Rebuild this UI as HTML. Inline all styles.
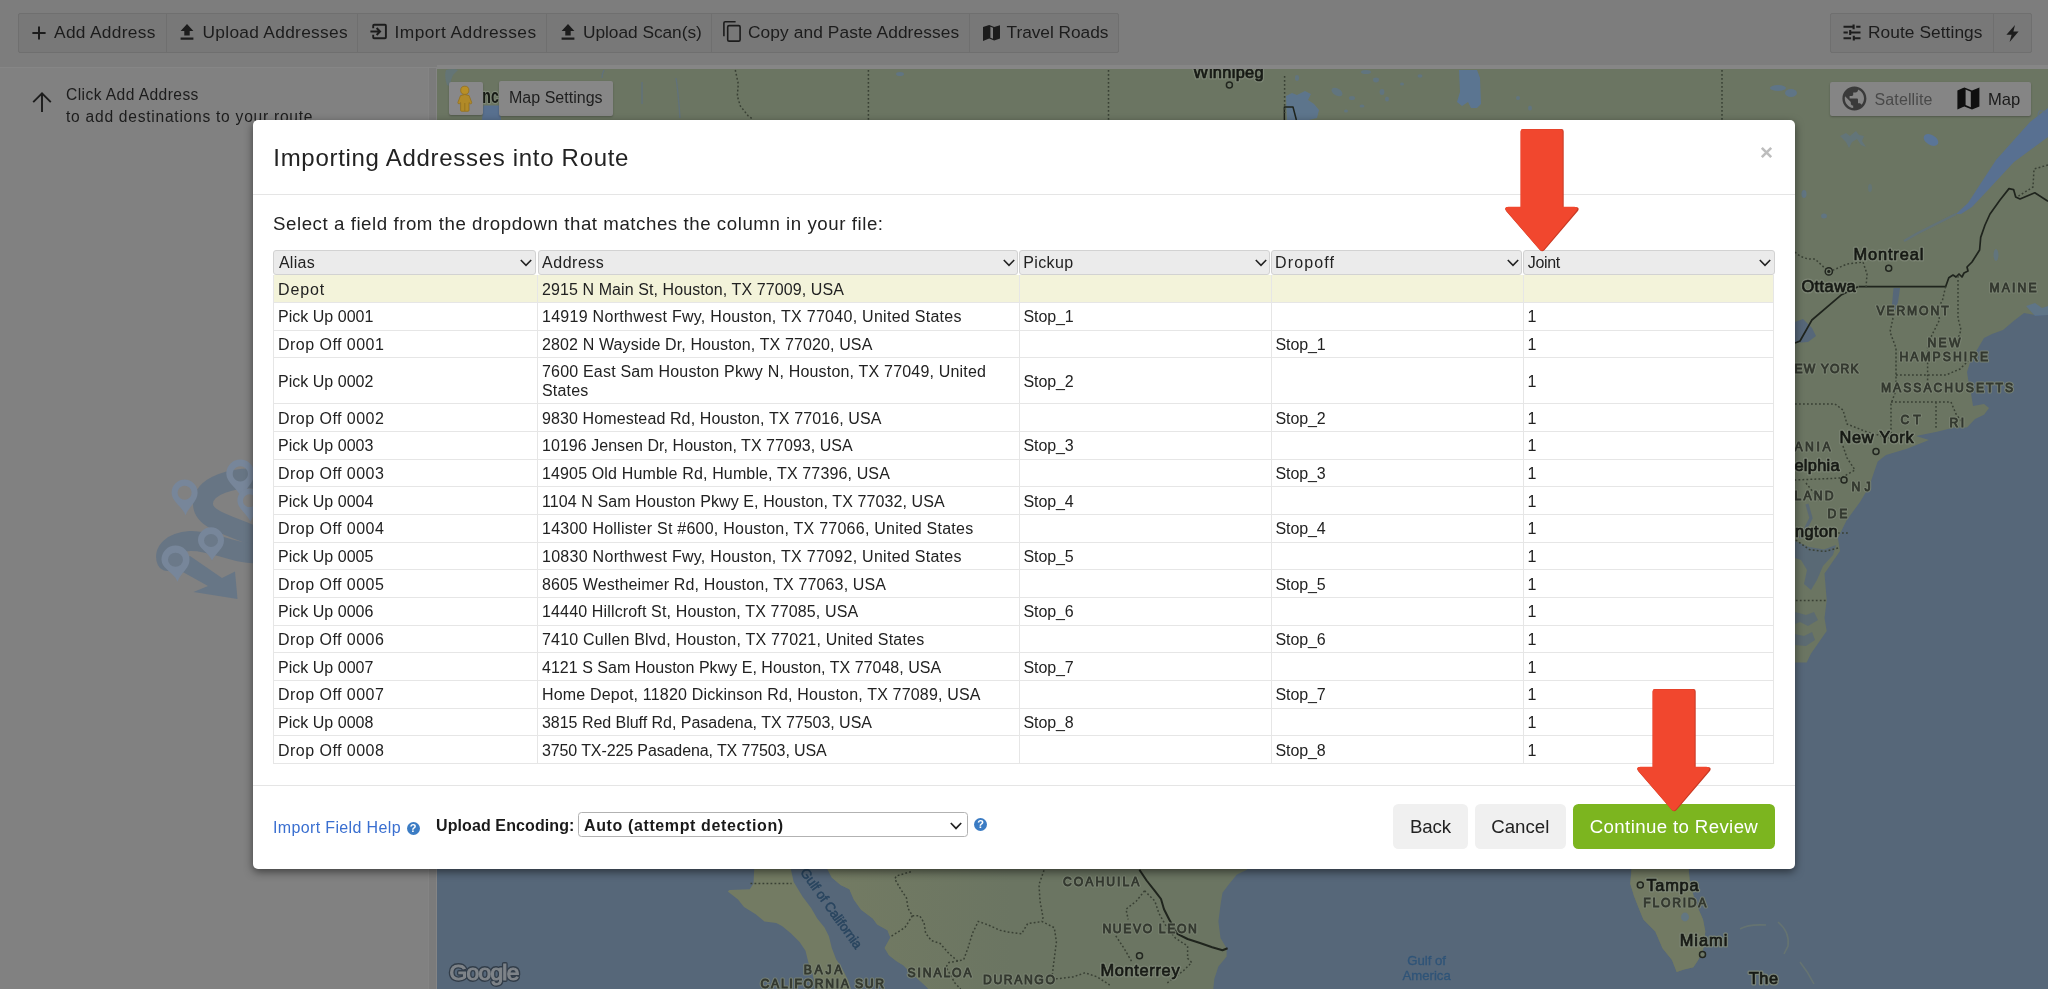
<!DOCTYPE html>
<html lang="en">
<head>
<meta charset="utf-8">
<title>Importing Addresses into Route</title>
<style>
*{box-sizing:border-box}
html,body{margin:0;padding:0}
body{width:2048px;height:989px;overflow:hidden;position:relative;background:#818181;font-family:"Liberation Sans",Arial,sans-serif;color:#1a1a1a}
.abs{position:absolute}
#toolbar,#left,#hint,#modal,#map{will-change:transform;backface-visibility:hidden}
/* ---------- top toolbar ---------- */
#toolbar{position:absolute;left:0;top:0;width:2048px;height:68px;background:#7d7d7d;border-bottom:1px solid #868686}
#mapedge{position:absolute;left:437px;top:65px;width:1611px;height:4px;background:#868686}
.tgroup{position:absolute;top:13px;height:40px;background:#787878;border:1px solid #6f6f6f;border-radius:2px}
.tbtn{position:absolute;top:0;height:38px;border-right:1px solid #6f6f6f}
.tbtn:last-child{border-right:none}
.tbtn span{position:absolute;top:7.5px;font-size:17px;line-height:20px;white-space:nowrap;color:#1c1c1c}
.tbtn svg{position:absolute;overflow:visible}
/* ---------- left panel ---------- */
#left{position:absolute;left:0;top:68px;width:428px;height:921px;background:#818181}
#divider{position:absolute;left:428px;top:68px;width:9px;height:921px;background:#7b7b7b;border-left:1px solid #848484;border-right:1px solid #858585}
#hint{position:absolute;left:66px;top:83.6px;font-size:15.6px;line-height:22px;color:#1c1c1c;white-space:nowrap;letter-spacing:.5px}
/* ---------- map ---------- */
#map{position:absolute;left:437px;top:69px;width:1611px;height:920px;background:#6b7562;overflow:hidden}
.mbtn{position:absolute;background:#878787;border-radius:2px;box-shadow:0 1px 2px rgba(0,0,0,.25)}
/* ---------- modal ---------- */
#modal{position:absolute;left:253px;top:120px;width:1542px;height:748.5px;background:#fff;border-radius:5px;box-shadow:0 3px 8px rgba(0,0,0,.5)}
#mtitle{position:absolute;left:20.3px;top:22.5px;font-size:24px;line-height:30px;white-space:nowrap;color:#222;letter-spacing:.7px}
#mclose{position:absolute;left:1507.4px;top:25.5px;width:13px;height:13px}
.hr{position:absolute;left:0;width:1542px;height:1px;background:#e5e5e5}
#instr{position:absolute;left:20px;top:92px;font-size:18.67px;line-height:24px;white-space:nowrap;color:#222;letter-spacing:.56px}
/* table */
#tbl{position:absolute;left:20px;top:129.5px;width:1502px;height:514px}
.sel{position:absolute;top:0;height:25px;background:#ebebeb;border:1px solid #d2d2d2;border-radius:3px;font-size:16px;line-height:23px;padding-left:5px;color:#222;white-space:nowrap;letter-spacing:.2px}
.sel svg{position:absolute;right:2.5px;top:8px}
.row{position:absolute;left:0;width:1501px;border-bottom:1px solid #e6e6e6;border-left:1px solid #e6e6e6;border-right:1px solid #e6e6e6;background:#fff}
.row.depot{background:#f3f3da}
.c{position:absolute;top:0;height:100%;border-left:1px solid #e6e6e6;font-size:16px;line-height:19px;color:#222;padding-left:4px;padding-top:1px;display:flex;align-items:center}
.c:first-child{border-left:none}
/* footer */
#help{position:absolute;left:20px;top:696.3px;font-size:16px;line-height:24px;color:#3a6fd0;white-space:nowrap;letter-spacing:.36px}
#enc{position:absolute;left:183px;top:694px;font-size:16px;line-height:24px;font-weight:bold;color:#1a1a1a;white-space:nowrap;letter-spacing:.1px}
#encsel{position:absolute;left:325px;top:692px;width:390px;height:25px;border:1px solid #b2b2b2;border-radius:3.5px;background:#fff;font-size:16px;line-height:25px;font-weight:bold;padding-left:5px;color:#1a1a1a;white-space:nowrap;letter-spacing:.62px}
.qm{position:absolute;width:13px;height:13px;border-radius:50%;background:#3b7cc4;color:#fff;font-size:11px;line-height:13px;font-weight:bold;text-align:center}
.btn{position:absolute;top:684px;height:44.5px;border-radius:5.5px;font-size:18.67px;line-height:45.5px;text-align:center;white-space:nowrap;color:#222;background:#f0f0f0}
.btn.go{background:#7cb51f;color:#fff}
.arrow{position:absolute;overflow:visible}
</style>
</head>
<body>
<div id="toolbar">
  <div class="tgroup" style="left:17.5px;width:1101.5px">
    <div class="tbtn" style="left:0;width:148px">
      <svg style="left:13.5px;top:11.5px" width="14" height="14" viewBox="0 0 14 14"><path d="M7 .4v13.200M.4 7h13.200" stroke="#1c1c1c" stroke-width="2" fill="none"/></svg>
      <span style="left:35.5px;letter-spacing:.32px;font-size:17.33px">Add Address</span>
    </div>
    <div class="tbtn" style="left:148px;width:191px">
      <svg style="left:13px;top:9.800px" width="14" height="16" viewBox="0 0 14 16"><path d="M7 0 13.4 7H9.7V11.6H4.3V7H.6zM.6 13.6h12.8v2.1H.6z" fill="#1c1c1c"/></svg>
      <span style="left:36px;letter-spacing:.3px;font-size:17.33px">Upload Addresses</span>
    </div>
    <div class="tbtn" style="left:339px;width:189px">
      <svg style="left:12px;top:10px" width="17" height="15" viewBox="0 0 17 15"><path d="M3.2 4.2V1.7Q3.2.8 4.1.8H15q.9 0 .9.9v11.6q0 .9-.9.9H4.1q-.9 0-.9-.9v-2.5" stroke="#1c1c1c" stroke-width="1.900" fill="none"/><path d="M.4 7.5h9.400M6.600 4 10.100 7.500 6.600 11" stroke="#1c1c1c" stroke-width="1.900" fill="none"/></svg>
      <span style="left:37px;letter-spacing:.45px;font-size:17.33px">Import Addresses</span>
    </div>
    <div class="tbtn" style="left:528px;width:165px">
      <svg style="left:14px;top:9.800px" width="14" height="16" viewBox="0 0 14 16"><path d="M7 0 13.4 7H9.7V11.6H4.3V7H.6zM.6 13.6h12.8v2.1H.6z" fill="#1c1c1c"/></svg>
      <span style="left:36.5px;letter-spacing:-.05px;font-size:17.33px">Upload Scan(s)</span>
    </div>
    <div class="tbtn" style="left:693px;width:258.5px">
      <svg style="left:11.5px;top:7px" width="18" height="21" viewBox="0 0 18 21"><path d="M12.6.8H2.2Q.9.8.9 2.1v13.2" stroke="#1c1c1c" stroke-width="1.6" fill="none"/><rect x="4.7" y="4.6" width="12.4" height="15.5" rx="1.4" stroke="#1c1c1c" stroke-width="1.6" fill="none"/></svg>
      <span style="left:36.5px;letter-spacing:.09px;font-size:17.33px">Copy and Paste Addresses</span>
    </div>
    <div class="tbtn" style="left:951.5px;width:148px">
      <svg style="left:12.5px;top:10.5px" width="17" height="16" viewBox="0 0 17 16"><path d="M0 1.900 6.200 0 11.200 1.900 17 .3V13.600L11.200 15.400 6.200 13.600 0 16z" fill="#1c1c1c"/><path d="M7.400 1.700 10 2.700V13.800L7.400 12.800z" fill="#7c7c7c"/></svg>
      <span style="left:36.5px;letter-spacing:-.04px;font-size:17.33px">Travel Roads</span>
    </div>
  </div>
  <div class="tgroup" style="left:1830px;width:202px">
    <div class="tbtn" style="left:0;width:162.5px">
      <svg style="left:12px;top:9.5px" width="18" height="17" viewBox="0 0 18 17"><path d="M.5 2.8h10M13.2 2.8h4.3M.5 8.5h4.3M7.4 8.5h10.1M.5 14.2h7.6M10.8 14.2h6.7M10.6.4v4.8M7.2 6.1v4.8M10.8 11.8v4.8" stroke="#1c1c1c" stroke-width="2.1" fill="none"/></svg>
      <span style="left:37px;letter-spacing:.06px;font-size:17.33px">Route Settings</span>
    </div>
    <div class="tbtn" style="left:162.5px;width:37.5px">
      <svg style="left:12px;top:11px" width="13" height="17" viewBox="0 0 13 17"><path d="M9 0 .4 9.8h5.2L3.6 17l9-10.6H7.4z" fill="#1c1c1c"/></svg>
    </div>
  </div>
</div>
<div id="left">
  <svg class="abs" style="left:32px;top:24px" width="20" height="21" viewBox="0 0 20 21"><path d="M10 20V1.6M1.2 10.2 10 1.4l8.8 8.8" stroke="#1c1c1c" stroke-width="1.9" fill="none"/></svg>
  <svg class="abs" style="left:150px;top:372px" width="103" height="180" viewBox="150 440 103 180">
    <g fill="none" stroke="#677584" stroke-width="20" stroke-linecap="round" stroke-linejoin="round">
      <path d="M262 479C232 476 204 486 203 503 202 522 236 526 262 540"/>
      <path d="M262 553C236 556 214 540 190 541 172 542 163 552 167 561"/>
    </g>
    <path d="M172 566 190 556 222 578 235 571.5 237.5 599 193.5 592 208 586z" fill="#677686"/>
    <g fill="#77869a">
      <path d="M184.6 479.5a13 13 0 0 1 13 13.2c0 9-9 14-12 22.6-3-8.600-14-13.600-14-22.600a13 13 0 0 1 13-13.200zm0 6.200a7 7 0 1 0 .01 0z" fill-rule="evenodd"/>
      <path d="M240.300 459.500a14 14 0 0 1 14 14.200c0 9-9 15-13 24-3-9-15-15-15-24a14 14 0 0 1 14-14.200zm0 6.800a7.600 7.600 0 1 0 .01 0z" fill-rule="evenodd"/>
      <path d="M249.400 488.500a12 12 0 0 1 12 12.200c0 8-8 13-11 21-3-8-13-13-13-21a12 12 0 0 1 12-12.200zm0 5.800a6.400 6.400 0 1 0 .01 0z" fill-rule="evenodd"/>
      <path d="M211 527.300a13 13 0 0 1 13 13.200c0 8-8 12-12 20-3-8-14-12-14-20a13 13 0 0 1 13-13.200z"/>
      <path d="M175.500 545.500a14 14 0 0 1 14 14.200c0 9-9 13-12 22-3-9-16-13-16-22a14 14 0 0 1 14-14.200z"/>
    </g>
    <ellipse cx="211" cy="540.500" rx="7" ry="6.500" fill="#6b7989"/><ellipse cx="175.500" cy="559.800" rx="7.500" ry="7" fill="#6b7989"/>
  </svg>
</div>
<div id="hint"><span style="letter-spacing:.42px">Click Add Address</span><br><span style="letter-spacing:.74px">to add destinations to your route</span></div>
<div id="divider"></div>
<div id="mapedge"></div>
<div id="map">
<svg width="1611" height="920" viewBox="437 69 1611 920" style="position:absolute;left:0;top:0" font-family="Liberation Sans, Arial, sans-serif">
<defs><linearGradient id="mx" gradientUnits="userSpaceOnUse" x1="830" x2="1010" y1="0" y2="0"><stop offset="0" stop-color="#737b63"/><stop offset="1" stop-color="#6b7562"/></linearGradient></defs>
<rect x="437" y="69" width="1611" height="920" fill="#566779"/>
<path fill="#6b7562" d="M437 69 2048 69 2048 315 2035 315 2024 313 2013.6 321 2003 330 1992 334 1984 338 1977.5 349 1971 359.5 1967 372 1969 385 1971 393.4 1973 406 1984 404 1989 408 1984 414.7 1975 419 1967 427.4 1954 427.4 1937 431.7 1916 436 1929 440 1907 448.7 1886 455 1877.7 461.4 1873.4 474 1869 487 1860 502 1846.8 520 1837.9 538 1840 551 1824.5 573.5 1826.7 600 1824.5 618 1826.7 631 1811 653.6 1806.7 662.5 1795 662.5 1780 700 1700 860 1688.7 869 1689.9 883.8 1695.8 902.9 1703 919.6 1705.3 931.5 1703 950.5 1698.2 960 1693.4 967.2 1683.9 969.6 1676.7 972 1672 960 1662.5 948.2 1655.3 931.5 1643.4 919.6 1638.6 907.7 1633.9 895.7 1630.3 883.8 1631.5 869 1600 860 1250 860 1247 869.8 1236.9 874.4 1228.7 884.6 1222.5 892.8 1220.5 905 1218.4 921.5 1220.5 938 1226.6 948.2 1226.6 956.4 1218.4 966.6 1214.3 979 1213.3 989 928.5 989 925.6 986 908 969.9 903.6 965.5 896.3 961.1 889 955.2 884.6 947.9 890.4 937.6 887.5 930.3 877.2 924.5 872.8 918.6 861.1 909.8 853.8 899.5 849.4 889.3 840.6 884.9 831.8 877.6 827.4 869 827 860 437 860Z"/>
<path fill="url(#mx)" d="M827 860 827.4 869 831.8 877.6 840.6 884.9 849.4 889.3 853.8 899.5 861.1 909.8 872.8 918.6 877.2 924.5 887.5 930.3 890.4 937.6 884.6 947.9 889 955.2 896.3 961.1 903.6 965.5 908 969.9 925.6 986 928.5 989 1010 989 1010 860Z"/>
<path fill="#737b63" d="M754.2 860 754.2 869 753.5 883.4 749.8 889.3 729.3 890 727.8 891.5 738 899.5 744 906.9 755.7 914.2 764.5 921.5 776.2 923 782 925.9 790.8 933.2 799.6 942 805.5 950.8 808.4 962.5 811.3 968.4 816 989 851 989 848 980 840.6 965.5 836.2 959.6 831.8 947.9 828.9 936.2 824.5 927.4 817.2 918.6 811.3 908.3 802.5 896.6 793.7 882 790.8 869 790.8 860Z"/>
<path fill="#727a63" d="M1700 860 1688.7 869 1689.9 883.8 1695.8 902.9 1703 919.6 1705.3 931.5 1703 950.5 1698.2 960 1693.4 967.2 1683.9 969.6 1676.7 972 1672 960 1662.5 948.2 1655.3 931.5 1643.4 919.6 1638.6 907.7 1633.9 895.7 1630.3 883.8 1631.5 869 1600 860Z"/>
<path fill="#587091" d="M2048 108 2030 122 1996 160 1968 203 1956 214 1961 214 1972 207 1988 190 2014 162 2048 137Z"/>
<path d="M1956 214 1940 222 1918 233 1904 241" stroke="#5f7280" stroke-width="2.2" fill="none" opacity=".75"/>
<path fill="#566779" d="M1795 322 1803 319 1812 328 1816 336 1808 342 1795 343Z"/>
<path fill="#566779" d="M1893.5 288h6.5l-2 14-2.5 8h-4z"/>
<path fill="#566779" opacity=".85" d="M1795 541 1809 547 1824 549.500 1836 545 1833 555 1823 566 1817 580 1811 590 1804 584 1807 570 1801 560 1795 558Z"/>
<path stroke="#566779" stroke-width="3.200" fill="none" opacity=".8" d="M1807 504 1811 518 1806 528 1800 538"/>
<path fill="#566779" opacity=".7" d="M1795 612 1806 615 1814 612 1818 620 1808 626 1800 622 1795 624ZM1795 634 1804 636 1812 632 1815 640 1806 646 1795 645Z"/>
<g fill="#5a7597">
<path d="M483.500 105.500h16l1.500 14.500h-19z" fill="#58708f"/>
<path d="M1459 70h18l3 8 1 26-4 4h-6l-3-6-6 4-5-4 3-10z" opacity=".9"/>
<path d="M1286 96l6-3 5 2 8-4 6 3-3 6 6 4 5 6-2 8-8 2h-22z" opacity=".8"/>
<g opacity=".55"><ellipse cx="1337" cy="92" rx="6" ry="3.5" transform="rotate(30 1337 92)"/><ellipse cx="1352" cy="98" rx="3" ry="2"/><ellipse cx="1376" cy="80" rx="3" ry="2.4"/><ellipse cx="1382" cy="92" rx="2.4" ry="3"/><ellipse cx="1387" cy="99" rx="2" ry="2.5"/><ellipse cx="1366" cy="72" rx="5" ry="2"/><ellipse cx="1402" cy="84" rx="2" ry="1.6"/><ellipse cx="1420" cy="76" rx="2.5" ry="1.8"/><ellipse cx="1297" cy="78" rx="2" ry="3"/><ellipse cx="1530" cy="108" rx="2" ry="2.5"/><ellipse cx="1518" cy="98" rx="2" ry="2"/><ellipse cx="1362" cy="106" rx="2.5" ry="1.6"/><ellipse cx="1346" cy="111" rx="2" ry="1.5"/></g>
<ellipse cx="900" cy="74" rx="4" ry="2" opacity=".6"/><ellipse cx="1778" cy="88" rx="8" ry="3" opacity=".7"/><ellipse cx="1791" cy="93" rx="6" ry="4" opacity=".7"/>
<ellipse cx="1931" cy="140" rx="8" ry="5" transform="rotate(30 1931 140)"/><ellipse cx="1685" cy="917" rx="4" ry="4.4" opacity=".6"/>
<path d="M446 70q8-2 12 0l-5 5q-3 6-2 12l-4-2q-3-8-1-15z" opacity=".4"/><path d="M1840 136l6-3 4 3 6-5 3 4 5 1-2 5 4 6-5-2-4-6-5 3-3 6-3-6z" opacity=".45"/>
<path d="M2026 306l9-3 7 5 6-2v9l-13 1z" opacity=".7"/><ellipse cx="1996" cy="255" rx="2.5" ry="6" opacity=".5"/><ellipse cx="1824" cy="216" rx="3" ry="2.5" opacity=".6"/><ellipse cx="1804" cy="194" rx="2.5" ry="4" opacity=".6"/><ellipse cx="1870" cy="188" rx="2" ry="4" opacity=".35"/>
</g>
<g stroke="#5d7186" stroke-width="1.4" fill="none" opacity=".7"><path d="M604 70q-2 4-2 8M642 82v22M676 78q2 12 4 40M2046 113q-8-6-8 4"/></g>
<g stroke="#69776f" stroke-width="1.6" fill="none" opacity=".8"><path d="M1740 929q8-5 26-4M1778 922q12 10 10 24l-4 8M1800 962q8 10 14 22"/></g>
<g stroke="#1f241d" stroke-width="1.7" fill="none" stroke-linejoin="round">
<path d="M1858.6 286.7H1945.6L1948.8 277.8 1953 275 1956 277 1959 274 1962 277 1964 273 1968 271 1967 267 1972 262 1979.6 250 1980.7 237.4 1985 225 1990 214 2000 200 2009 188.6 2013.6 189.6 2015.7 197 2020 199 2034.8 192.8 2048 201.3"/>
<path d="M1795 343 1800 341 1811.9 320 1841.6 294.7 1858 286.7"/>
<path d="M1139.4 869.8 1146.6 880.5 1154.8 890.8 1161 899 1164 909.2 1169.2 919.5 1177.4 933.8 1187.6 939 1200 943 1212.2 947.2 1222.5 950.2 1227.6 948.2" stroke-width="2"/>
<path d="M1284.4 120v-13h8.6l3.4 13" stroke-width="1.5"/>
</g>
<g stroke="#394034" stroke-width="1.5" fill="none" stroke-dasharray="1.8 2.2">
<path d="M735.3 70 738.3 84 737.3 96 740.3 106 748.3 116 753.3 119.5M868.4 70v50M1108.5 70v50M1284.6 76v37M1722 70v50"/>
<path d="M1795 252q8 8 20 7l14 13M1829 272l18-8 16-2 4 12-1 14"/>
<path d="M2048 165l-14 4-1 18-16 10"/>
<path d="M1945.6 286.7l-3 13-5 10 2 10-8 16-4 12v38M1958 276v42l3 12-4 12"/>
<path d="M1893 318l-3 14 6 16v42l-5 14v30M1896 375h50l14-6 8-8M1891 402h60l5 12 6 8M1936 402v28"/>
<path d="M1795 404h40l8 6 4 14 20 8 22 6M1843 446l4 12 8 12-14 8-46 2"/>
<path d="M1838 533h10M1795.800 540 1809.200 549.500 1824.600 551.400 1839.900 547.600M1795.800 600.400h30M1806 483l14 18"/>
<path d="M750.5 883.4H791.5"/>
<path d="M910.9 871.7 896.3 876 894.8 879 900.7 889.3 906.5 898 908 908.3 912.4 915.7 905 927.4 890.4 936.9"/>
<path d="M912.4 915.7 919.7 915.7 924.1 923 925.6 933.2 931.4 940.6 940.2 943.5 949 953.7 957.8 961.1 963.7 959.6 968 947.9 972.5 933.2 978.3 921.5 987.1 924.5 1000 930.3 1007 931.8 1021.5 933.8 1027.7 923.6 1042 921.5 1054.3 927.7 1056.4 942 1054.3 958.4 1052.3 974.8 1054.3 979 1072.8 977 1085 972.8 1097.4 977 1109.7 985"/>
<path d="M957.8 961.1 949 962.5 946 967 954.9 983 960.7 989"/>
<path d="M1044 870.3 1039 884.6 1040 901 1043 917.4 1042 921.5"/>
<path d="M1144.6 890.8 1136.4 901 1126 909.2 1128.2 919.5"/>
<path d="M1115.8 935.9 1124 948.2 1132.2 962.5"/>
<path d="M1144.6 890.8 1154.8 901 1158.9 913.3 1167.1 927.7 1175.3 937.9 1187.6 946.1 1187.6 958.4 1191.7 962.5 1183.5 970.7 1167.1 983"/>
</g>
<g font-size="12.2" font-weight="400" fill="none" stroke="#7b8473" stroke-width="3" stroke-linejoin="round" opacity=".85"><text x="1989.4" y="292" textLength="47.2" lengthAdjust="spacing">MAINE</text><text x="1876.4" y="315.4" textLength="72.2" lengthAdjust="spacing">VERMONT</text><text x="1927.4" y="347" textLength="33.2" lengthAdjust="spacing">NEW</text><text x="1899.4" y="361" textLength="88.8" lengthAdjust="spacing">HAMPSHIRE</text><text x="1794.4" y="373.3" textLength="64.2" lengthAdjust="spacing">EW YORK</text><text x="1880.9" y="391.7" textLength="132.2" lengthAdjust="spacing">MASSACHUSETTS</text><text x="1900.4" y="423.6" textLength="20.2" lengthAdjust="spacing">CT</text><text x="1949.4" y="427.4" textLength="14.7" lengthAdjust="spacing">RI</text><text x="1794.4" y="450.8" textLength="36.2" lengthAdjust="spacing">ANIA</text><text x="1851.4" y="491" textLength="19.2" lengthAdjust="spacing">NJ</text><text x="1794.4" y="500.3" textLength="39.2" lengthAdjust="spacing">LAND</text><text x="1827.4" y="517.9" textLength="20" lengthAdjust="spacing">DE</text><text x="1643.3" y="906.5" textLength="63.1" lengthAdjust="spacing">FLORIDA</text><text x="1062.9" y="886.3" textLength="76.5" lengthAdjust="spacing">COAHUILA</text><text x="1102.4" y="932.9" textLength="94.4" lengthAdjust="spacing">NUEVO LEON</text><text x="983" y="983.7" textLength="71.9" lengthAdjust="spacing">DURANGO</text><text x="907.4" y="977.2" textLength="64.2" lengthAdjust="spacing">SINALOA</text><text x="803.7" y="974.4" textLength="38.7" lengthAdjust="spacing">BAJA</text><text x="760.6" y="987.5" textLength="123.4" lengthAdjust="spacing">CALIFORNIA SUR</text></g>
<g font-size="12.2" font-weight="400" fill="#33382f" stroke="#33382f" stroke-width=".8"><text x="1989.4" y="292" textLength="47.2" lengthAdjust="spacing">MAINE</text><text x="1876.4" y="315.4" textLength="72.2" lengthAdjust="spacing">VERMONT</text><text x="1927.4" y="347" textLength="33.2" lengthAdjust="spacing">NEW</text><text x="1899.4" y="361" textLength="88.8" lengthAdjust="spacing">HAMPSHIRE</text><text x="1794.4" y="373.3" textLength="64.2" lengthAdjust="spacing">EW YORK</text><text x="1880.9" y="391.7" textLength="132.2" lengthAdjust="spacing">MASSACHUSETTS</text><text x="1900.4" y="423.6" textLength="20.2" lengthAdjust="spacing">CT</text><text x="1949.4" y="427.4" textLength="14.7" lengthAdjust="spacing">RI</text><text x="1794.4" y="450.8" textLength="36.2" lengthAdjust="spacing">ANIA</text><text x="1851.4" y="491" textLength="19.2" lengthAdjust="spacing">NJ</text><text x="1794.4" y="500.3" textLength="39.2" lengthAdjust="spacing">LAND</text><text x="1827.4" y="517.9" textLength="20" lengthAdjust="spacing">DE</text><text x="1643.3" y="906.5" textLength="63.1" lengthAdjust="spacing">FLORIDA</text><text x="1062.9" y="886.3" textLength="76.5" lengthAdjust="spacing">COAHUILA</text><text x="1102.4" y="932.9" textLength="94.4" lengthAdjust="spacing">NUEVO LEON</text><text x="983" y="983.7" textLength="71.9" lengthAdjust="spacing">DURANGO</text><text x="907.4" y="977.2" textLength="64.2" lengthAdjust="spacing">SINALOA</text><text x="803.7" y="974.4" textLength="38.7" lengthAdjust="spacing">BAJA</text><text x="760.6" y="987.5" textLength="123.4" lengthAdjust="spacing">CALIFORNIA SUR</text></g>
<g font-size="16.4" font-weight="400" fill="none" stroke="#7f8878" stroke-width="3.2" stroke-linejoin="round" opacity=".9"><text x="1853.4" y="260" textLength="69.9" lengthAdjust="spacing">Montreal</text><text x="1801.4" y="291.5" textLength="54.2" lengthAdjust="spacing">Ottawa</text><text x="1839.4" y="442.7" textLength="74.2" lengthAdjust="spacing">New York</text><text x="1794.4" y="471" textLength="45.2" lengthAdjust="spacing">elphia</text><text x="1795" y="537" textLength="42.6" lengthAdjust="spacing">ngton</text><text x="1193.1" y="77.7" textLength="70.5" lengthAdjust="spacing">Winnipeg</text><text x="1646.4" y="891" textLength="52.2" lengthAdjust="spacing">Tampa</text><text x="1679.7" y="946.3" textLength="47.7" lengthAdjust="spacing">Miami</text><text x="1748.8" y="984.4" textLength="29.3" lengthAdjust="spacing">The</text><text x="1100.4" y="976" textLength="79.2" lengthAdjust="spacing">Monterrey</text></g>
<g font-size="16.4" font-weight="400" fill="#171a15" stroke="#171a15" stroke-width=".7"><text x="1853.4" y="260" textLength="69.9" lengthAdjust="spacing">Montreal</text><text x="1801.4" y="291.5" textLength="54.2" lengthAdjust="spacing">Ottawa</text><text x="1839.4" y="442.7" textLength="74.2" lengthAdjust="spacing">New York</text><text x="1794.4" y="471" textLength="45.2" lengthAdjust="spacing">elphia</text><text x="1795" y="537" textLength="42.6" lengthAdjust="spacing">ngton</text><text x="1193.1" y="77.7" textLength="70.5" lengthAdjust="spacing">Winnipeg</text><text x="1646.4" y="891" textLength="52.2" lengthAdjust="spacing">Tampa</text><text x="1679.7" y="946.3" textLength="47.7" lengthAdjust="spacing">Miami</text><text x="1748.8" y="984.4" textLength="29.3" lengthAdjust="spacing">The</text><text x="1100.4" y="976" textLength="79.2" lengthAdjust="spacing">Monterrey</text></g>
<text x="482.3" y="103.4" textLength="16.4" lengthAdjust="spacingAndGlyphs" font-size="20" font-weight="700" fill="#171a15" stroke="#7f8878" stroke-width="2.4" paint-order="stroke" stroke-linejoin="round">nc</text>
<g fill="#6f7968" stroke="#22261f" stroke-width="1.5"><circle cx="1888.7" cy="268.2" r="3"/><circle cx="1828.8" cy="271.4" r="3.6"/><circle cx="1876" cy="451.5" r="3"/><circle cx="1844" cy="480" r="3"/><circle cx="1229.4" cy="84.9" r="3"/><circle cx="1640.3" cy="885" r="3"/><circle cx="1702.5" cy="954.6" r="3"/><circle cx="1139.5" cy="955.7" r="3"/></g>
<circle cx="1828.8" cy="271.4" r="1.6" fill="#22261f"/>
<g font-size="13.2" fill="#2f5478" stroke="#2f5478" stroke-width=".3" text-anchor="middle"><text x="1426.6" y="964.7">Gulf of</text><text x="1426.6" y="980.3">America</text></g>
<text font-size="13.4" fill="#29455f" stroke="#29455f" stroke-width=".5" transform="translate(799.8 872.3) rotate(54.3)" textLength="95.5" lengthAdjust="spacing">Gulf of California</text>
<text x="449.6" y="979.9" font-size="22.8" fill="none" stroke="#323d49" stroke-width="3.8" stroke-linejoin="round" letter-spacing="-.75">Google</text>
<text x="449.6" y="979.9" font-size="22.8" fill="#7f8489" stroke="#7f8489" stroke-width="1.1" letter-spacing="-.75">Google</text>
</svg>
<div class="mbtn" style="left:12px;top:12.5px;width:33.5px;height:33.5px;background:#88888a">
  <svg style="position:absolute;left:0;top:0" width="33" height="33" viewBox="0 0 33 33"><path d="M11.500 13.600Q15.800 11.400 20.100 13.600L22.700 20.400Q22.900 22 21.300 21.800L20 20.600V28.200Q20 29.300 19 29.300H12.600Q11.600 29.300 11.600 28.200V20.600L10.300 21.800Q8.700 22 8.900 20.400Z" fill="#b18a28" stroke="#94701c" stroke-width=".8"/><circle cx="15.800" cy="8.300" r="4.100" fill="#b88f27" stroke="#94701c" stroke-width=".8"/><path d="M15.800 21v8" stroke="#94701c" stroke-width=".8"/></svg>
</div>
<div class="mbtn" style="left:61.5px;top:12px;width:114px;height:34.5px;font-size:16px;line-height:34.5px;color:#1e1e1e;padding-left:10.5px;white-space:nowrap;letter-spacing:.02px">Map Settings</div>
<div class="mbtn" style="left:1393px;top:12.5px;width:201px;height:34px;background:#858585">
  <svg style="position:absolute;left:10.200px;top:2.200px" width="28.800" height="28.800" viewBox="0 0 24 24"><path fill="#3a3a3a" d="M12 2C6.480 2 2 6.480 2 12s4.480 10 10 10 10-4.480 10-10S17.520 2 12 2zm-1 17.930c-3.950-.490-7-3.850-7-7.930 0-.620.080-1.210.210-1.790L9 15v1c0 1.100.900 2 2 2v1.930zm6.900-2.540c-.260-.810-1-1.390-1.900-1.390h-1v-3c0-.550-.450-1-1-1H8v-2h2c.550 0 1-.450 1-1V7h2c1.100 0 2-.900 2-2v-.410c2.930 1.190 5 4.060 5 7.410 0 2.080-.800 3.970-2.100 5.390z"/></svg>
  <span style="position:absolute;left:44.5px;top:8.2px;font-size:16px;line-height:20px;color:#494949;letter-spacing:.12px">Satellite</span>
  <svg style="position:absolute;left:126.5px;top:5.5px" width="23" height="23" viewBox="0 0 23 23"><path d="M.4 3.4 7.4.4 15 3.4 22.4.4V19.4L15 22.4 7.4 19.4.4 22.4z" fill="#101010"/><path d="M8.6 2.6 13.8 4.7V20.2L8.6 18.1z" fill="#8a8a8a"/></svg>
  <span style="position:absolute;left:158px;top:8.2px;font-size:16.6px;line-height:20px;color:#1a1a1a;letter-spacing:0">Map</span>
</div>
</div>
<div id="modal">
<div id="mtitle">Importing Addresses into Route</div>
<svg id="mclose" viewBox="0 0 13 13"><path d="M1.8 1.8l9.4 9.4M11.2 1.8 1.8 11.2" stroke="#bdbdbd" stroke-width="2.6" fill="none"/></svg>
<div class="hr" style="top:74px"></div>
<div id="instr">Select a field from the dropdown that matches the column in your file:</div>
<div id="tbl">
<div class="sel" style="left:0.0px;width:262.9px;letter-spacing:0.3px;padding-left:4.9px">Alias<svg width="12" height="8" viewBox="0 0 12 8"><path d="M.8 1 6 6.4 11.2 1" stroke="#222" stroke-width="1.6" fill="none"/></svg></div>
<div class="sel" style="left:264.8px;width:480.7px;letter-spacing:0.5px;padding-left:3.3px">Address<svg width="12" height="8" viewBox="0 0 12 8"><path d="M.8 1 6 6.4 11.2 1" stroke="#222" stroke-width="1.6" fill="none"/></svg></div>
<div class="sel" style="left:745.9px;width:251.6px;letter-spacing:0.36px;padding-left:3.4px">Pickup<svg width="12" height="8" viewBox="0 0 12 8"><path d="M.8 1 6 6.4 11.2 1" stroke="#222" stroke-width="1.6" fill="none"/></svg></div>
<div class="sel" style="left:997.9px;width:251.6px;letter-spacing:1.1px;padding-left:3.2px">Dropoff<svg width="12" height="8" viewBox="0 0 12 8"><path d="M.8 1 6 6.4 11.2 1" stroke="#222" stroke-width="1.6" fill="none"/></svg></div>
<div class="sel" style="left:1249.9px;width:252.0px;letter-spacing:-0.35px;padding-left:3.9px">Joint<svg width="12" height="8" viewBox="0 0 12 8"><path d="M.8 1 6 6.4 11.2 1" stroke="#222" stroke-width="1.6" fill="none"/></svg></div>
<div class="row depot" style="top:25.80px;height:27.67px"><div class="c" style="left:0.0px;width:263.5px;letter-spacing:0.85px"><span>Depot</span></div><div class="c" style="left:263.0px;width:481.5px;letter-spacing:0.09px"><span>2915 N Main St, Houston, TX 77009, USA</span></div><div class="c" style="left:744.5px;width:252.0px"><span></span></div><div class="c" style="left:996.5px;width:252.0px"><span></span></div><div class="c" style="left:1248.5px;width:252.0px"><span></span></div></div>
<div class="row" style="top:53.47px;height:27.67px"><div class="c" style="left:0.0px;width:263.5px;letter-spacing:0.02px"><span>Pick Up 0001</span></div><div class="c" style="left:263.0px;width:481.5px;letter-spacing:0.28px"><span>14919 Northwest Fwy, Houston, TX 77040, United States</span></div><div class="c" style="left:744.5px;width:252.0px;letter-spacing:-0.10px"><span>Stop_1</span></div><div class="c" style="left:996.5px;width:252.0px"><span></span></div><div class="c" style="left:1248.5px;width:252.0px;letter-spacing:0.00px"><span>1</span></div></div>
<div class="row" style="top:81.14px;height:27.67px"><div class="c" style="left:0.0px;width:263.5px;letter-spacing:0.47px"><span>Drop Off 0001</span></div><div class="c" style="left:263.0px;width:481.5px;letter-spacing:0.12px"><span>2802 N Wayside Dr, Houston, TX 77020, USA</span></div><div class="c" style="left:744.5px;width:252.0px"><span></span></div><div class="c" style="left:996.5px;width:252.0px;letter-spacing:-0.10px"><span>Stop_1</span></div><div class="c" style="left:1248.5px;width:252.0px;letter-spacing:0.00px"><span>1</span></div></div>
<div class="row" style="top:108.81px;height:46.10px"><div class="c" style="left:0.0px;width:263.5px;letter-spacing:0.02px"><span>Pick Up 0002</span></div><div class="c" style="left:263.0px;width:481.5px;letter-spacing:0.19px"><span>7600 East Sam Houston Pkwy N, Houston, TX 77049, United<br>States</span></div><div class="c" style="left:744.5px;width:252.0px;letter-spacing:-0.10px"><span>Stop_2</span></div><div class="c" style="left:996.5px;width:252.0px"><span></span></div><div class="c" style="left:1248.5px;width:252.0px;letter-spacing:0.00px"><span>1</span></div></div>
<div class="row" style="top:154.91px;height:27.67px"><div class="c" style="left:0.0px;width:263.5px;letter-spacing:0.47px"><span>Drop Off 0002</span></div><div class="c" style="left:263.0px;width:481.5px;letter-spacing:0.11px"><span>9830 Homestead Rd, Houston, TX 77016, USA</span></div><div class="c" style="left:744.5px;width:252.0px"><span></span></div><div class="c" style="left:996.5px;width:252.0px;letter-spacing:-0.10px"><span>Stop_2</span></div><div class="c" style="left:1248.5px;width:252.0px;letter-spacing:0.00px"><span>1</span></div></div>
<div class="row" style="top:182.58px;height:27.67px"><div class="c" style="left:0.0px;width:263.5px;letter-spacing:0.02px"><span>Pick Up 0003</span></div><div class="c" style="left:263.0px;width:481.5px;letter-spacing:0.04px"><span>10196 Jensen Dr, Houston, TX 77093, USA</span></div><div class="c" style="left:744.5px;width:252.0px;letter-spacing:-0.10px"><span>Stop_3</span></div><div class="c" style="left:996.5px;width:252.0px"><span></span></div><div class="c" style="left:1248.5px;width:252.0px;letter-spacing:0.00px"><span>1</span></div></div>
<div class="row" style="top:210.25px;height:27.67px"><div class="c" style="left:0.0px;width:263.5px;letter-spacing:0.47px"><span>Drop Off 0003</span></div><div class="c" style="left:263.0px;width:481.5px;letter-spacing:0.14px"><span>14905 Old Humble Rd, Humble, TX 77396, USA</span></div><div class="c" style="left:744.5px;width:252.0px"><span></span></div><div class="c" style="left:996.5px;width:252.0px;letter-spacing:-0.10px"><span>Stop_3</span></div><div class="c" style="left:1248.5px;width:252.0px;letter-spacing:0.00px"><span>1</span></div></div>
<div class="row" style="top:237.92px;height:27.67px"><div class="c" style="left:0.0px;width:263.5px;letter-spacing:0.02px"><span>Pick Up 0004</span></div><div class="c" style="left:263.0px;width:481.5px;letter-spacing:0.10px"><span>1104 N Sam Houston Pkwy E, Houston, TX 77032, USA</span></div><div class="c" style="left:744.5px;width:252.0px;letter-spacing:-0.10px"><span>Stop_4</span></div><div class="c" style="left:996.5px;width:252.0px"><span></span></div><div class="c" style="left:1248.5px;width:252.0px;letter-spacing:0.00px"><span>1</span></div></div>
<div class="row" style="top:265.59px;height:27.67px"><div class="c" style="left:0.0px;width:263.5px;letter-spacing:0.47px"><span>Drop Off 0004</span></div><div class="c" style="left:263.0px;width:481.5px;letter-spacing:0.24px"><span>14300 Hollister St #600, Houston, TX 77066, United States</span></div><div class="c" style="left:744.5px;width:252.0px"><span></span></div><div class="c" style="left:996.5px;width:252.0px;letter-spacing:-0.10px"><span>Stop_4</span></div><div class="c" style="left:1248.5px;width:252.0px;letter-spacing:0.00px"><span>1</span></div></div>
<div class="row" style="top:293.26px;height:27.67px"><div class="c" style="left:0.0px;width:263.5px;letter-spacing:0.02px"><span>Pick Up 0005</span></div><div class="c" style="left:263.0px;width:481.5px;letter-spacing:0.28px"><span>10830 Northwest Fwy, Houston, TX 77092, United States</span></div><div class="c" style="left:744.5px;width:252.0px;letter-spacing:-0.10px"><span>Stop_5</span></div><div class="c" style="left:996.5px;width:252.0px"><span></span></div><div class="c" style="left:1248.5px;width:252.0px;letter-spacing:0.00px"><span>1</span></div></div>
<div class="row" style="top:320.93px;height:27.67px"><div class="c" style="left:0.0px;width:263.5px;letter-spacing:0.47px"><span>Drop Off 0005</span></div><div class="c" style="left:263.0px;width:481.5px;letter-spacing:0.14px"><span>8605 Westheimer Rd, Houston, TX 77063, USA</span></div><div class="c" style="left:744.5px;width:252.0px"><span></span></div><div class="c" style="left:996.5px;width:252.0px;letter-spacing:-0.10px"><span>Stop_5</span></div><div class="c" style="left:1248.5px;width:252.0px;letter-spacing:0.00px"><span>1</span></div></div>
<div class="row" style="top:348.60px;height:27.67px"><div class="c" style="left:0.0px;width:263.5px;letter-spacing:0.02px"><span>Pick Up 0006</span></div><div class="c" style="left:263.0px;width:481.5px;letter-spacing:0.15px"><span>14440 Hillcroft St, Houston, TX 77085, USA</span></div><div class="c" style="left:744.5px;width:252.0px;letter-spacing:-0.10px"><span>Stop_6</span></div><div class="c" style="left:996.5px;width:252.0px"><span></span></div><div class="c" style="left:1248.5px;width:252.0px;letter-spacing:0.00px"><span>1</span></div></div>
<div class="row" style="top:376.27px;height:27.67px"><div class="c" style="left:0.0px;width:263.5px;letter-spacing:0.47px"><span>Drop Off 0006</span></div><div class="c" style="left:263.0px;width:481.5px;letter-spacing:0.20px"><span>7410 Cullen Blvd, Houston, TX 77021, United States</span></div><div class="c" style="left:744.5px;width:252.0px"><span></span></div><div class="c" style="left:996.5px;width:252.0px;letter-spacing:-0.10px"><span>Stop_6</span></div><div class="c" style="left:1248.5px;width:252.0px;letter-spacing:0.00px"><span>1</span></div></div>
<div class="row" style="top:403.94px;height:27.67px"><div class="c" style="left:0.0px;width:263.5px;letter-spacing:0.02px"><span>Pick Up 0007</span></div><div class="c" style="left:263.0px;width:481.5px;letter-spacing:0.02px"><span>4121 S Sam Houston Pkwy E, Houston, TX 77048, USA</span></div><div class="c" style="left:744.5px;width:252.0px;letter-spacing:-0.10px"><span>Stop_7</span></div><div class="c" style="left:996.5px;width:252.0px"><span></span></div><div class="c" style="left:1248.5px;width:252.0px;letter-spacing:0.00px"><span>1</span></div></div>
<div class="row" style="top:431.61px;height:27.67px"><div class="c" style="left:0.0px;width:263.5px;letter-spacing:0.47px"><span>Drop Off 0007</span></div><div class="c" style="left:263.0px;width:481.5px;letter-spacing:0.18px"><span>Home Depot, 11820 Dickinson Rd, Houston, TX 77089, USA</span></div><div class="c" style="left:744.5px;width:252.0px"><span></span></div><div class="c" style="left:996.5px;width:252.0px;letter-spacing:-0.10px"><span>Stop_7</span></div><div class="c" style="left:1248.5px;width:252.0px;letter-spacing:0.00px"><span>1</span></div></div>
<div class="row" style="top:459.28px;height:27.67px"><div class="c" style="left:0.0px;width:263.5px;letter-spacing:0.02px"><span>Pick Up 0008</span></div><div class="c" style="left:263.0px;width:481.5px;letter-spacing:-0.03px"><span>3815 Red Bluff Rd, Pasadena, TX 77503, USA</span></div><div class="c" style="left:744.5px;width:252.0px;letter-spacing:-0.10px"><span>Stop_8</span></div><div class="c" style="left:996.5px;width:252.0px"><span></span></div><div class="c" style="left:1248.5px;width:252.0px;letter-spacing:0.00px"><span>1</span></div></div>
<div class="row" style="top:486.95px;height:27.67px"><div class="c" style="left:0.0px;width:263.5px;letter-spacing:0.47px"><span>Drop Off 0008</span></div><div class="c" style="left:263.0px;width:481.5px;letter-spacing:-0.11px"><span>3750 TX-225 Pasadena, TX 77503, USA</span></div><div class="c" style="left:744.5px;width:252.0px"><span></span></div><div class="c" style="left:996.5px;width:252.0px;letter-spacing:-0.10px"><span>Stop_8</span></div><div class="c" style="left:1248.5px;width:252.0px;letter-spacing:0.00px"><span>1</span></div></div>
</div>
<div class="hr" style="top:664.5px"></div>
<div id="help">Import Field Help</div>
<div class="qm" style="left:153.5px;top:701.8px">?</div>
<div id="enc">Upload Encoding:</div>
<div id="encsel">Auto (attempt detection)<svg style="position:absolute;right:5px;top:8.5px" width="12" height="8" viewBox="0 0 12 8"><path d="M.8 1 6 6.4 11.2 1" stroke="#222" stroke-width="1.7" fill="none"/></svg></div>
<div class="qm" style="left:721px;top:697.8px">?</div>
<div class="btn" style="left:1140px;width:75px;letter-spacing:-.15px">Back</div>
<div class="btn" style="left:1222px;width:90.5px">Cancel</div>
<div class="btn go" style="left:1320px;width:202px;letter-spacing:.37px">Continue to Review</div>
</div>
<svg class="arrow" style="left:1504px;top:128px" width="78" height="126" viewBox="0 0 78 126">
  <defs><path id="arw" d="M19 1.1H57.4Q59.7 1.1 59.7 3.4V79H71.5Q76.6 79.4 73.5 83.4L40.6 122Q38.2 124.7 35.8 122L2.4 83.4Q-.8 79.4 4.4 79H16.7V3.4Q16.7 1.1 19 1.1Z"/></defs>
  <use href="#arw" fill="#c93a24"/>
  <use href="#arw" fill="#f1472e" transform="translate(.15 .1) scale(.98 .994)"/>
</svg>
<svg class="arrow" style="left:1635.7px;top:688.2px" width="78" height="126" viewBox="0 0 78 126">
  <use href="#arw" fill="#c93a24"/>
  <use href="#arw" fill="#f1472e" transform="translate(.15 .1) scale(.98 .994)"/>
</svg>
</body>
</html>
